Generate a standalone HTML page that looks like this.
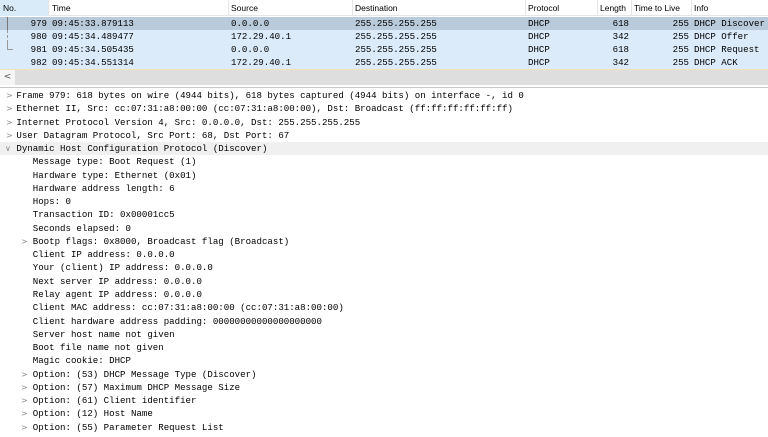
<!DOCTYPE html>
<html><head><meta charset="utf-8"><style>
*{margin:0;padding:0;box-sizing:border-box}
body{width:768px;height:437px;overflow:hidden;background:#fff;position:relative;font-family:"Liberation Mono","DejaVu Sans Mono",monospace;color:#000}
.hdr{position:absolute;top:0;left:0;width:768px;height:16px;background:#fff;border-bottom:1px solid #e5e5e5;font-family:"Liberation Sans",sans-serif;font-size:8.5px}
.hdr span{position:absolute;top:3px}
.sep{position:absolute;top:0;width:1px;height:16px;background:#e5e5e5}
.row{position:absolute;left:0;width:768px;height:13px;background:#dcebfa;font-size:9.1px;line-height:13px}
.row span{position:absolute;top:0;white-space:pre}
.r{text-align:right}
.sb{position:absolute;top:70px;left:0;width:768px;height:15px;background:#dedede}
.det{position:absolute;left:0;top:89px;width:768px;font-size:9.1px}
.l{height:13.28px;line-height:13.28px;white-space:pre;position:relative}
.a{position:absolute;color:#8a8a8a;font-family:"DejaVu Sans",sans-serif;font-size:8px}
</style></head><body>
<div class="hdr">
<div style="position:absolute;left:0;top:0;width:48px;height:16px;background:#d9ebf9"></div>
<span style="left:3px">No.</span><span style="left:52px">Time</span><span style="left:231px">Source</span><span style="left:355px">Destination</span><span style="left:528px">Protocol</span><span style="left:600px">Length</span><span style="left:634px">Time to Live</span><span style="left:694px">Info</span>
<div class="sep" style="left:48px"></div><div class="sep" style="left:228px"></div><div class="sep" style="left:352px"></div><div class="sep" style="left:525px"></div><div class="sep" style="left:597px"></div><div class="sep" style="left:631px"></div><div class="sep" style="left:691px"></div>
</div>
<div class="row" style="top:17px;background:#b9cbdb"><span class="r" style="left:0;width:47px">979</span><span style="left:52px">09:45:33.879113</span><span style="left:231px">0.0.0.0</span><span style="left:355px">255.255.255.255</span><span style="left:528px">DHCP</span><span class="r" style="left:590px;width:39px">618</span><span class="r" style="left:640px;width:49px">255</span><span style="left:694px">DHCP Discover</span></div>
<div class="row" style="top:30px"><span class="r" style="left:0;width:47px">980</span><span style="left:52px">09:45:34.489477</span><span style="left:231px">172.29.40.1</span><span style="left:355px">255.255.255.255</span><span style="left:528px">DHCP</span><span class="r" style="left:590px;width:39px">342</span><span class="r" style="left:640px;width:49px">255</span><span style="left:694px">DHCP Offer</span></div>
<div class="row" style="top:43px"><span class="r" style="left:0;width:47px">981</span><span style="left:52px">09:45:34.505435</span><span style="left:231px">0.0.0.0</span><span style="left:355px">255.255.255.255</span><span style="left:528px">DHCP</span><span class="r" style="left:590px;width:39px">618</span><span class="r" style="left:640px;width:49px">255</span><span style="left:694px">DHCP Request</span></div>
<div class="row" style="top:56px"><span class="r" style="left:0;width:47px">982</span><span style="left:52px">09:45:34.551314</span><span style="left:231px">172.29.40.1</span><span style="left:355px">255.255.255.255</span><span style="left:528px">DHCP</span><span class="r" style="left:590px;width:39px">342</span><span class="r" style="left:640px;width:49px">255</span><span style="left:694px">DHCP ACK</span></div>
<div style="position:absolute;left:7px;top:17px;width:1px;height:13px;background:#777"></div>
<div style="position:absolute;left:7px;top:30px;width:0;height:13px;border-left:1px dashed #999"></div>
<div style="position:absolute;left:7px;top:43px;width:6px;height:7px;border-left:1px solid #999;border-bottom:1px solid #999"></div>
<div style="position:absolute;left:0;top:69px;width:768px;height:1px;background:#f3e3b0"></div>
<div class="sb"><div style="position:absolute;left:0;top:0;width:15px;height:15px;background:#f5f5f5;font-family:'DejaVu Sans',sans-serif;font-size:9px;line-height:15px;text-align:center;color:#555">&lt;</div></div>
<div style="position:absolute;left:0;top:87px;width:768px;height:1px;background:#c8c8c8"></div>
<div class="det">
<div class="l"><span class="a" style="left:6px">&gt;</span>   Frame 979: 618 bytes on wire (4944 bits), 618 bytes captured (4944 bits) on interface -, id 0</div>
<div class="l"><span class="a" style="left:6px">&gt;</span>   Ethernet II, Src: cc:07:31:a8:00:00 (cc:07:31:a8:00:00), Dst: Broadcast (ff:ff:ff:ff:ff:ff)</div>
<div class="l"><span class="a" style="left:6px">&gt;</span>   Internet Protocol Version 4, Src: 0.0.0.0, Dst: 255.255.255.255</div>
<div class="l"><span class="a" style="left:6px">&gt;</span>   User Datagram Protocol, Src Port: 68, Dst Port: 67</div>
<div class="l" style="background:#f0f0f0"><span class="a" style="left:5px">&#8744;</span>   Dynamic Host Configuration Protocol (Discover)</div>
<div class="l">      Message type: Boot Request (1)</div>
<div class="l">      Hardware type: Ethernet (0x01)</div>
<div class="l">      Hardware address length: 6</div>
<div class="l">      Hops: 0</div>
<div class="l">      Transaction ID: 0x00001cc5</div>
<div class="l">      Seconds elapsed: 0</div>
<div class="l"><span class="a" style="left:21px">&gt;</span>      Bootp flags: 0x8000, Broadcast flag (Broadcast)</div>
<div class="l">      Client IP address: 0.0.0.0</div>
<div class="l">      Your (client) IP address: 0.0.0.0</div>
<div class="l">      Next server IP address: 0.0.0.0</div>
<div class="l">      Relay agent IP address: 0.0.0.0</div>
<div class="l">      Client MAC address: cc:07:31:a8:00:00 (cc:07:31:a8:00:00)</div>
<div class="l">      Client hardware address padding: 00000000000000000000</div>
<div class="l">      Server host name not given</div>
<div class="l">      Boot file name not given</div>
<div class="l">      Magic cookie: DHCP</div>
<div class="l"><span class="a" style="left:21px">&gt;</span>      Option: (53) DHCP Message Type (Discover)</div>
<div class="l"><span class="a" style="left:21px">&gt;</span>      Option: (57) Maximum DHCP Message Size</div>
<div class="l"><span class="a" style="left:21px">&gt;</span>      Option: (61) Client identifier</div>
<div class="l"><span class="a" style="left:21px">&gt;</span>      Option: (12) Host Name</div>
<div class="l"><span class="a" style="left:21px">&gt;</span>      Option: (55) Parameter Request List</div>
</div>
</body></html>
